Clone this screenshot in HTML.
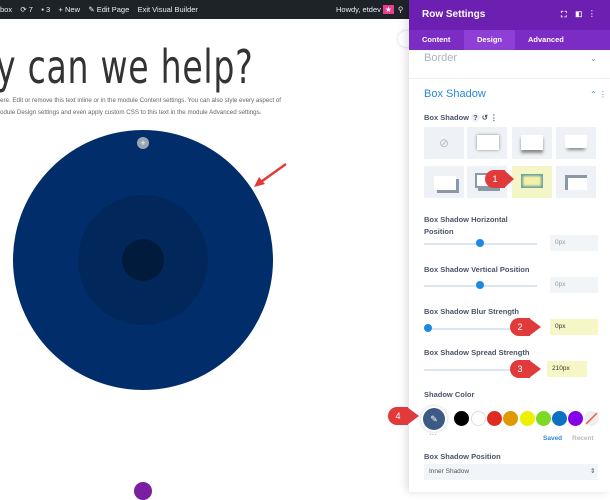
<!DOCTYPE html><html><head><style>
*{margin:0;padding:0;box-sizing:border-box}
body{width:610px;height:492px;overflow:hidden;background:#fff;font-family:"Liberation Sans",sans-serif;position:relative}
.a{position:absolute}
.bar{left:0;top:0;width:410px;height:19px;background:#1d2327;color:#eee;font-size:7.5px;line-height:19px;white-space:nowrap}
.lbl{font-size:7.5px;color:#4a5568;font-weight:bold}
.track{height:2px;background:#dbe6f0}
.dot{width:8px;height:8px;border-radius:50%;background:#1e88e5}
.inp{width:48px;height:16px;background:#f1f5f9;font-size:6.5px;color:#999;line-height:16px;padding-left:5px}
.box{width:40px;height:32px;background:#eef2f6}
.sw{width:15px;height:15px;border-radius:50%;top:411px}
.pin{width:20px;height:18px;background:#e03a3a;color:#fff;font-size:9px;line-height:18px;text-align:center;border-radius:9px 0 0 9px}
</style></head><body>
<div class="a bar"><span style="margin-left:0">box &nbsp;&nbsp; ⟳ 7 &nbsp;&nbsp; ▪ 3 &nbsp;&nbsp; + New &nbsp;&nbsp; ✎ Edit Page &nbsp;&nbsp; Exit Visual Builder</span><span class="a" style="left:336px">Howdy, etdev <span style="background:#e83e8c;color:#fff;padding:0 2px">★</span>&nbsp; ⚲</span></div>
<div class="a" style="left:-4px;top:40px;font-size:46px;color:#333;letter-spacing:1px;font-family:'DejaVu Sans',sans-serif;transform:scaleX(0.72);transform-origin:0 0;white-space:nowrap">y can we help?</div>
<div class="a" style="left:0;top:95px;font-size:6.2px;color:#666;line-height:12px;width:400px">ere. Edit or remove this text inline or in the module Content settings. You can also style every aspect of<br>odule Design settings and even apply custom CSS to this text in the module Advanced settings.</div>
<div class="a" style="left:13px;top:130px;width:260px;height:260px;border-radius:50%;background:#012e6b"></div>
<div class="a" style="left:78px;top:195px;width:130px;height:130px;border-radius:50%;background:#02285b"></div>
<div class="a" style="left:122px;top:239px;width:42px;height:42px;border-radius:50%;background:#011b3d"></div>
<div class="a" style="left:137px;top:137px;width:12px;height:12px;border-radius:50%;background:#9aa5b4;color:#fff;font-size:9px;line-height:12px;text-align:center">+</div>
<svg class="a" style="left:250px;top:160px" width="40" height="30"><path d="M36 4 L8 24" stroke="#e53935" stroke-width="2.5"/><path d="M4 27 L9 17 L15 24 Z" fill="#e53935"/></svg>
<div class="a" style="left:134px;top:482px;width:18px;height:18px;border-radius:50%;background:#7b1fa2"></div>
<div class="a" style="left:398px;top:31px;width:16px;height:16px;border-radius:50%;background:#fff;box-shadow:0 0 3px #ccc"></div>
<div class="a" style="left:409px;top:0;width:201px;height:492px;background:#fff;box-shadow:-3px 0 8px rgba(0,0,0,.12)"></div>
<div class="a" style="left:409px;top:0;width:201px;height:34px;background:#6c1fb0;color:#fff;font-weight:bold;font-size:10px;line-height:30px;padding-left:13px">Row Settings<span class="a" style="left:152px;font-size:8px">⛶ &nbsp;&nbsp; ◧ &nbsp;&nbsp; ⋮</span></div>
<div class="a" style="left:409px;top:30px;width:201px;height:20px;background:#7b2cc4;color:#fff;font-size:7.5px;font-weight:bold;line-height:20px"><span style="margin-left:13px">Content</span><span class="a" style="left:55px;width:51px;background:#8e3fd6;text-align:center">Design</span><span class="a" style="left:119px">Advanced</span></div>
<div class="a" style="left:424px;top:52px;font-size:11px;color:#a8b3c0">Border</div><div class="a" style="left:590px;top:54px;font-size:8px;color:#888">⌄</div>
<div class="a" style="left:409px;top:78px;width:201px;height:1px;background:#eef1f4"></div>
<div class="a" style="left:424px;top:88px;font-size:11px;color:#2b87da">Box Shadow</div><div class="a" style="left:590px;top:90px;font-size:8px;color:#2b87da">⌃ ⋮</div>
<div class="a lbl" style="left:424px;top:113px">Box Shadow <span style="background:#eef2f6;border-radius:50%;padding:0 2px">?</span> ↺ ⋮</div>
<div class="a box" style="left:424px;top:127px;color:#bbb;text-align:center;line-height:32px;font-size:12px">⊘</div>
<div class="a box" style="left:467px;top:127px"><div class="a" style="left:10px;top:8px;width:22px;height:15px;background:#fff;box-shadow:0 0 3px #888"></div></div>
<div class="a box" style="left:512px;top:127px"><div class="a" style="left:9px;top:8px;width:22px;height:15px;background:#fff;box-shadow:0 3px 3px #888"></div></div>
<div class="a box" style="left:556px;top:127px"><div class="a" style="left:9px;top:8px;width:22px;height:13px;background:#fff;box-shadow:0 4px 3px -2px #888"></div></div>
<div class="a box" style="left:424px;top:166px"><div class="a" style="left:10px;top:10px;width:22px;height:14px;background:#fff;box-shadow:3px 3px 0 #8a98a8"></div></div>
<div class="a box" style="left:467px;top:166px"><div class="a" style="left:8px;top:7px;width:22px;height:15px;background:#fff;box-shadow:3px 3px 0 #8a98a8;border:2px solid #8a98a8"></div></div>
<div class="a box" style="left:512px;top:166px;background:#f4f6c8"><div class="a" style="left:9px;top:8px;width:22px;height:14px;background:#f4f2a8;box-shadow:inset 0 0 2px 2px #6aa09a"></div></div>
<div class="a box" style="left:556px;top:166px"><div class="a" style="left:9px;top:9px;width:22px;height:15px;background:#fff;box-shadow:inset 3px 3px 0 #8a98a8"></div></div>
<div class="a pin" style="left:485px;top:170px">1</div><svg class="a" style="left:504px;top:170px" width="10" height="18"><path d="M0 0 L10 9 L0 18Z" fill="#e03a3a"/></svg>
<div class="a lbl" style="left:424px;top:214px;line-height:12px">Box Shadow Horizontal<br>Position</div>
<div class="a track" style="left:424px;top:243px;width:113px"></div><div class="a dot" style="left:476px;top:239px"></div><div class="a inp" style="left:550px;top:235px">0px</div>
<div class="a lbl" style="left:424px;top:265px">Box Shadow Vertical Position</div>
<div class="a track" style="left:424px;top:285px;width:113px"></div><div class="a dot" style="left:476px;top:281px"></div><div class="a inp" style="left:550px;top:277px">0px</div>
<div class="a lbl" style="left:424px;top:307px">Box Shadow Blur Strength</div>
<div class="a track" style="left:424px;top:328px;width:113px"></div><div class="a dot" style="left:424px;top:324px"></div><div class="a inp" style="left:550px;top:319px;background:#f6f6c6;color:#333;width:48px">0px</div>
<div class="a pin" style="left:510px;top:318px">2</div><svg class="a" style="left:529px;top:318px" width="12" height="18"><path d="M0 0 L12 9 L0 18Z" fill="#e03a3a"/></svg>
<div class="a lbl" style="left:424px;top:348px">Box Shadow Spread Strength</div>
<div class="a track" style="left:424px;top:369px;width:113px"></div><div class="a inp" style="left:547px;top:361px;background:#f6f6c6;color:#333;width:40px">210px</div>
<div class="a pin" style="left:510px;top:360px">3</div><svg class="a" style="left:529px;top:360px" width="12" height="18"><path d="M0 0 L12 9 L0 18Z" fill="#e03a3a"/></svg>
<div class="a lbl" style="left:424px;top:390px">Shadow Color</div>
<div class="a sw" style="left:423px;top:408px;width:22px;height:22px;background:#3c5a85;box-shadow:0 0 0 2px #fff,0 0 3px 2px #ccc;color:#fff;font-size:9px;text-align:center;line-height:22px">✎</div>
<div class="a pin" style="left:388px;top:407px">4</div><svg class="a" style="left:407px;top:407px" width="12" height="18"><path d="M0 0 L12 9 L0 18Z" fill="#e03a3a"/></svg>
<div class="a sw" style="left:454px;background:#000"></div>
<div class="a sw" style="left:471px;background:#fff;border:1px solid #ddd"></div>
<div class="a sw" style="left:487px;background:#e02b20"></div>
<div class="a sw" style="left:503px;background:#e09900"></div>
<div class="a sw" style="left:520px;background:#edf000"></div>
<div class="a sw" style="left:536px;background:#7cda24"></div>
<div class="a sw" style="left:552px;background:#0c71c3"></div>
<div class="a sw" style="left:568px;background:#8300e9"></div>
<div class="a sw" style="left:584px;background:#eee"><svg width="15" height="15"><path d="M2 13 L13 2" stroke="#e55" stroke-width="1.5"/></svg></div>
<div class="a" style="left:429px;top:430px;font-size:8px;color:#999">···</div>
<div class="a" style="left:543px;top:435px;font-size:6.5px;color:#2b87da;font-weight:bold">Saved</div><div class="a" style="left:572px;top:435px;font-size:6.5px;color:#bbb;font-weight:bold">Recent</div>
<div class="a lbl" style="left:424px;top:452px">Box Shadow Position</div>
<div class="a" style="left:424px;top:464px;width:174px;height:16px;background:#f1f5f9;font-size:6.5px;color:#555;line-height:16px;padding-left:5px">Inner Shadow<span class="a" style="left:166px">⇕</span></div>
</body></html>
